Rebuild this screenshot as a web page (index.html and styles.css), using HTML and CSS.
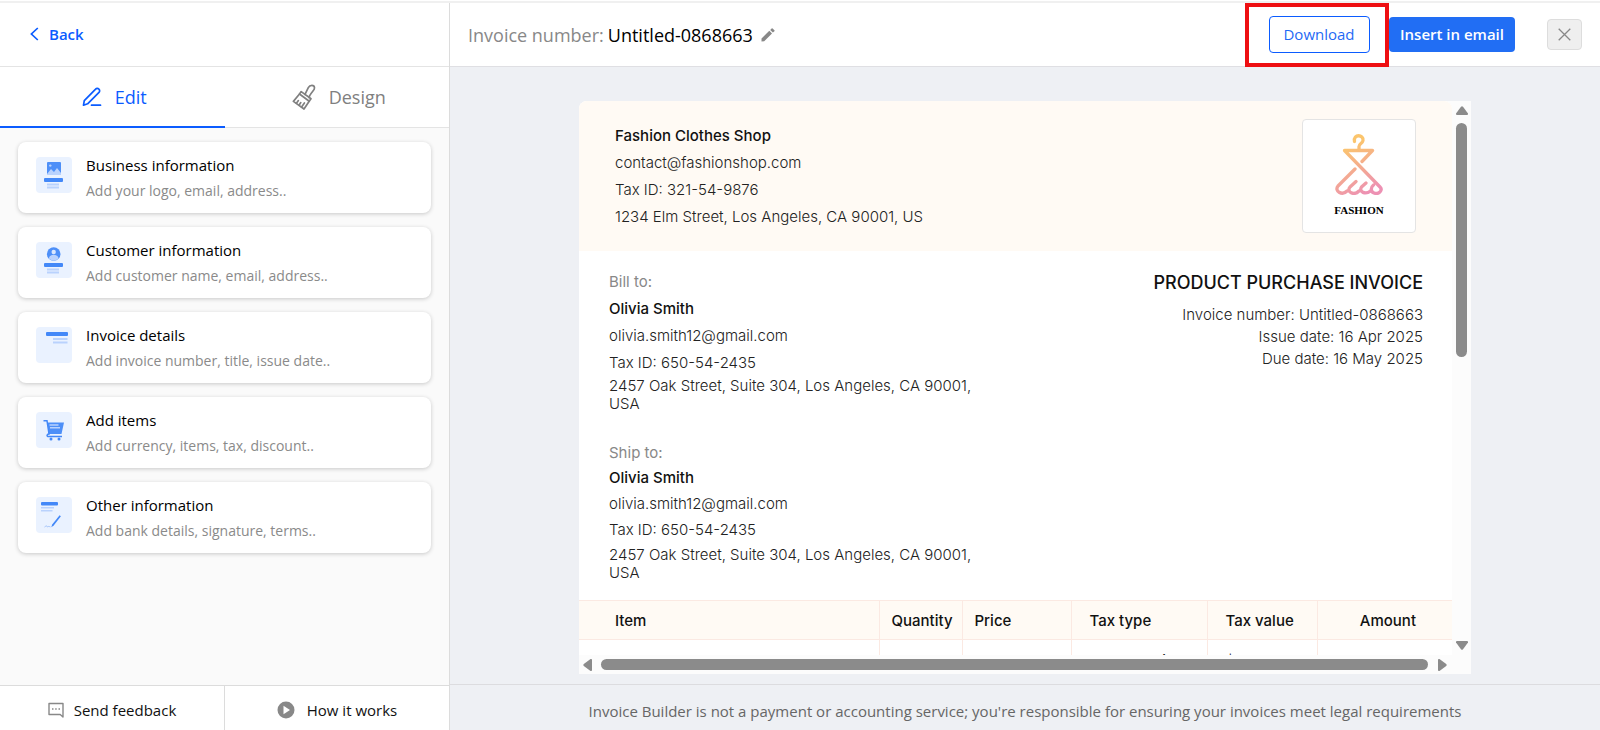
FILE: index.html
```html
<!DOCTYPE html>
<html lang="en">
<head>
  <meta charset="UTF-8">
  <title>Invoice Builder</title>
  <link rel="stylesheet" href="styles.css">
</head>
<body>
  <aside class="sidebar">
    <div class="back-bar">
      <a href="#" class="back">
        <svg width="9" height="14" viewBox="0 0 9 14" fill="none" stroke="currentColor" stroke-width="1.7"><path d="M7.8 1 1.4 7l6.4 6"/></svg>
        Back
      </a>
    </div>

    <div class="tabs">
      <button class="tab active">
        <svg width="20" height="20" viewBox="0 0 20 20" fill="none" stroke="currentColor" stroke-width="1.7" stroke-linejoin="round" stroke-linecap="round"><path d="M1.5 18.200l.8-4.600L13.600 2.200a2.300 2.300 0 0 1 3.400 3.200L5.600 16.800z"/><path d="M9.500 18.200h9"/></svg>
        Edit
      </button>
      <button class="tab">
        <svg width="24" height="26" viewBox="0 0 24 26" fill="none" stroke="currentColor" stroke-width="1.7" stroke-linejoin="round" stroke-linecap="round"><path d="M9.200 7.600 19 14.800 17.200 17.200 7.500 10z"/><path d="M7.500 10 1.400 17.400 12 25 17.200 17.200"/><path d="M13 10.400 16.300 3.600c1.500-3 6-3.200 6.200.200.200 2.200-2.400 3.600-4.800 7.800l-.6 2"/><path d="M4.400 19.200l2-2.600M7 21.200l1.800-2.600M9.600 23l2.800-4"/></svg>
        Design
      </button>
    </div>

    <nav class="sections">
      <a href="#" class="section">
        <svg class="section-icon" viewBox="0 0 36 36"><rect x="11" y="5" width="14" height="13" rx="1" fill="#4d8ff8"/><path d="M11 17l4-5 3 3 3-4 4 5v2H11z" fill="#b9d2fd"/><circle cx="14.300" cy="8.600" r="1.200" fill="#b9d2fd"/><rect x="8" y="21" width="19" height="4" rx="1" fill="#4388f8"/><path d="M11 27.500h12M11 30.500h12" stroke="#b9d2fd" stroke-width="1.800"/></svg>
        <span class="section-text">
          <span class="section-title">Business information</span>
          <span class="section-hint">Add your logo, email, address..</span>
        </span>
      </a>
      <a href="#" class="section">
        <svg class="section-icon" viewBox="0 0 36 36"><circle cx="17.700" cy="12" r="6.800" fill="#4d8ff8"/><circle cx="17.700" cy="10" r="2.200" fill="#d9e7fe"/><path d="M12.800 16.600c.6-5 9.200-5 9.800 0a6.800 6.800 0 0 1-9.800 0z" fill="#b9d2fd"/><rect x="8" y="21" width="19" height="4" rx="1" fill="#4388f8"/><path d="M11 27.500h12M11 30.500h12" stroke="#b9d2fd" stroke-width="1.800"/></svg>
        <span class="section-text">
          <span class="section-title">Customer information</span>
          <span class="section-hint">Add customer name, email, address..</span>
        </span>
      </a>
      <a href="#" class="section">
        <svg class="section-icon" viewBox="0 0 36 36"><rect x="10" y="5" width="22" height="4" rx="1" fill="#4388f8"/><path d="M17 12h14.500M17 15.500h14.500" stroke="#b9d2fd" stroke-width="1.800"/></svg>
        <span class="section-text">
          <span class="section-title">Invoice details</span>
          <span class="section-hint">Add invoice number, title, issue date..</span>
        </span>
      </a>
      <a href="#" class="section">
        <svg class="section-icon" viewBox="0 0 36 36"><path d="M11.500 10.500H28L25.500 22H13z" fill="#4d8ff8"/><path d="M7.500 8.700h3.500L13 22c-2.500 0-2.500 2.500-.5 2.500H26" fill="none" stroke="#4388f8" stroke-width="1.500"/><path d="M13.500 13h9M14 15.800h10" stroke="#b9d2fd" stroke-width="1.500"/><circle cx="15" cy="27" r="1.500" fill="#4388f8"/><circle cx="23" cy="27" r="1.500" fill="#4388f8"/></svg>
        <span class="section-text">
          <span class="section-title">Add items</span>
          <span class="section-hint">Add currency, items, tax, discount..</span>
        </span>
      </a>
      <a href="#" class="section">
        <svg class="section-icon" viewBox="0 0 36 36"><rect x="5" y="5" width="17" height="3.500" rx="1" fill="#4388f8"/><path d="M5 10.800h13M5 13.800h11.500" stroke="#b9d2fd" stroke-width="1.600"/><path d="M23.600 18.200l1.300 1-7.200 9.400-2.400 1.600.9-2.600z" fill="#4388f8"/><path d="M8.500 30c2-1.600 2.500-1.200 3 0 1-1 2-.5 3 0" fill="none" stroke="#a5c5fb"/></svg>
        <span class="section-text">
          <span class="section-title">Other information</span>
          <span class="section-hint">Add bank details, signature, terms..</span>
        </span>
      </a>
    </nav>

    <div class="sidebar-footer">
      <button class="help-btn">
        <svg width="16" height="16" viewBox="0 0 16 16" fill="none" stroke="#888" stroke-width="1.400"><path d="M1 1.500h14v13.500l-2.800-2.500H1z" stroke-linejoin="round"/><path d="M4 7h1.500M7.200 7h1.500M10.500 7H12"/></svg>
        Send feedback
      </button>
      <button class="help-btn how">
        <svg width="18" height="18" viewBox="0 0 18 18"><circle cx="9" cy="9" r="8.500" fill="#888"/><path d="M6.500 4.800 13 9l-6.500 4.200z" fill="#fff"/></svg>
        How it works
      </button>
    </div>
  </aside>

  <main class="main">
    <header class="topbar">
      <span class="number-label">Invoice number:</span>
      <span class="number">Untitled-0868663</span>
      <button class="rename" aria-label="Rename invoice">
        <svg width="14" height="14" viewBox="0 0 14 14" fill="#888"><path d="M.5 10.600 8.300 2.800l2.700 2.700-7.800 7.800L.5 13.500zM9.200 1.900l1.400-1.400q.5-.5 1 0l1.800 1.800q.5.500 0 1L11.900 4.600z"/></svg>
      </button>
      <div class="actions">
        <div class="highlight"><button class="btn btn-outline">Download</button></div>
        <button class="btn btn-primary">Insert in email</button>
        <button class="close" aria-label="Close">
          <svg width="13" height="13" viewBox="0 0 13 13" stroke="#888" stroke-width="1.300"><path d="M.7.700l11.600 11.600M12.300.700.7 12.300"/></svg>
        </button>
      </div>
    </header>

    <div class="workspace">
      <div class="preview">
        <div class="paper">
          <section class="seller">
            <div class="lines">
              <b>Fashion Clothes Shop</b>
              <span>contact@fashionshop.com</span>
              <span>Tax ID: 321-54-9876</span>
              <span>1234 Elm Street, Los Angeles, CA 90001, US</span>
            </div>
            <div class="logo">
              <svg width="48" height="61" viewBox="0 0 48 61" fill="none" stroke="url(#fade)" stroke-width="3.300" stroke-linecap="round" stroke-linejoin="round">
                <defs>
                  <linearGradient id="fade" gradientUnits="userSpaceOnUse" x1="12" y1="12" x2="34" y2="58">
                    <stop offset="0" stop-color="#fbc56d"/>
                    <stop offset="1" stop-color="#ed91b3"/>
                  </linearGradient>
                </defs>
                <path d="M19.500 7.500c-1.500-8 9.500-7 8.500-1-.5 3-4 3-4 6v3"/>
                <path d="M27 27.500 37.500 16.500h-28L45 53c3 3-1 8-6 6-4-1.500-3-6-.5-8"/>
                <path d="M20 35 3 52c-4 5 4 10 9 5M21 47.500l-6 5.500c-4 5 4 9 9 4M31 49l-4.500 4c-3 5 4 8 9 4"/>
              </svg>
              <span>FASHION</span>
            </div>
          </section>

          <section class="details">
            <div class="parties">
              <div class="lines">
                <span class="muted">Bill to:</span>
                <b>Olivia Smith</b>
                <span>olivia.smith12@gmail.com</span>
                <span>Tax ID: 650-54-2435</span>
                <span class="address">2457 Oak Street, Suite 304, Los Angeles, CA 90001, USA</span>
              </div>
              <div class="lines ship">
                <span class="muted">Ship to:</span>
                <b>Olivia Smith</b>
                <span>olivia.smith12@gmail.com</span>
                <span>Tax ID: 650-54-2435</span>
                <span class="address">2457 Oak Street, Suite 304, Los Angeles, CA 90001, USA</span>
              </div>
            </div>
            <div class="summary">
              <h1>PRODUCT PURCHASE INVOICE</h1>
              <span>Invoice number: Untitled-0868663</span>
              <span>Issue date: 16 Apr 2025</span>
              <span>Due date: 16 May 2025</span>
            </div>
          </section>

          <table class="items">
            <thead>
              <tr>
                <th class="item">Item</th>
                <th class="qty">Quantity</th>
                <th class="price">Price</th>
                <th class="tax-type">Tax type</th>
                <th class="tax-value">Tax value</th>
                <th class="amount">Amount</th>
              </tr>
            </thead>
            <tbody>
              <tr>
                <td></td>
                <td></td>
                <td></td>
                <td class="tax-type">Consumption tax</td>
                <td class="tax-value">$8.00</td>
                <td></td>
              </tr>
            </tbody>
          </table>
        </div>

        <div class="scroll-y">
          <svg width="12" height="9" viewBox="0 0 12 9" fill="#8b8b8b"><path d="M5 .8q1-1 2 0l5 6.700q.2 1.500-1 1.500H1q-1.200 0-1-1.500z"/></svg>
          <div class="thumb"></div>
          <svg width="12" height="9" viewBox="0 0 12 9" fill="#8b8b8b"><path d="M5 8.200q1 1 2 0l5-6.700Q12.200 0 11 0H1Q-.2 0 0 1.500z"/></svg>
        </div>
        <div class="scroll-x">
          <svg width="9" height="12" viewBox="0 0 9 12" fill="#8b8b8b"><path d="M.8 5q-1 1 0 2l6.700 5q1.500.2 1.500-1V1q0-1.200-1.500-1z"/></svg>
          <div class="thumb"></div>
          <svg width="9" height="12" viewBox="0 0 9 12" fill="#8b8b8b"><path d="M8.200 5q1 1 0 2l-6.700 5Q0 12.200 0 11V1Q0-.2 1.500 0z"/></svg>
        </div>
      </div>
    </div>

    <footer class="disclaimer">Invoice Builder is not a payment or accounting service; you're responsible for ensuring your invoices meet legal requirements</footer>
  </main>
</body>
</html>
```

FILE: styles.css
```css
* {
  box-sizing: border-box;
}
body {
  margin: 1px 0 0;
  height: calc(100vh - 1px);
  display: flex;
  border-top: 2px solid #f0f0f0;
  font-family: "Segoe UI", "Open Sans", sans-serif;
  font-size: 15px;
  color: #111;
  background: #fff;
}
button {
  font: inherit;
  color: inherit;
  background: none;
  border: 0;
  padding: 0;
  cursor: pointer;
}
a {
  color: inherit;
  text-decoration: none;
}
svg {
  flex: none;
}

/* sidebar */
.sidebar {
  width: 450px;
  flex: none;
  display: flex;
  flex-direction: column;
  border-right: 1px solid #dcdcdc;
  background: #fafafa;
}
.back-bar {
  height: 64px;
  display: flex;
  align-items: center;
  padding: 0 0 2px 30px;
  border-bottom: 1px solid #e4e4e4;
  background: #fff;
}
.back {
  display: flex;
  align-items: center;
  gap: 10px;
  font-weight: 600;
  color: #0b5cff;
}
.tabs {
  display: flex;
  background: #fff;
}
.tab {
  flex: 1;
  height: 61px;
  display: flex;
  align-items: center;
  justify-content: center;
  gap: 13px;
  padding-left: 4px;
  font-size: 18px;
  color: #808080;
  border-bottom: 1px solid #e4e4e4;
}
.tab.active {
  color: #0b5cff;
  border-bottom: 2px solid #0b5cff;
}
.sections {
  flex: 1;
  display: flex;
  flex-direction: column;
  gap: 14px;
  padding: 14px 18px;
}
.section {
  height: 71px;
  display: flex;
  gap: 14px;
  padding: 15px 18px;
  border-radius: 8px;
  background: #fff;
  box-shadow: 0 1px 4px rgba(0, 0, 0, 0.2);
}
.section-icon {
  width: 36px;
  height: 36px;
  border-radius: 4px;
  background: #eaf2ff;
}
.section-text {
  display: flex;
  flex-direction: column;
  gap: 2px;
  line-height: 24px;
  margin-top: -4px;
}
.section-title {
  font-weight: 500;
  color: #000;
}
.section-hint {
  color: #8a8a8a;
  font-size: 14px;
}
.sidebar-footer {
  height: 45px;
  display: flex;
  border-top: 1px solid #dcdcdc;
  background: #fff;
}
.help-btn {
  flex: 1;
  display: flex;
  align-items: center;
  justify-content: center;
  gap: 10px;
  padding-top: 4px;
  font-weight: 500;
}
.help-btn.how {
  gap: 12px;
  border-left: 1px solid #dcdcdc;
}

/* main column */
.main {
  flex: 1;
  min-width: 0;
  display: flex;
  flex-direction: column;
  background: #eef0f4;
}
.topbar {
  height: 64px;
  flex: none;
  display: flex;
  align-items: center;
  padding: 0 18px;
  font-size: 18px;
  border-bottom: 1px solid #dfdfe3;
  background: #fff;
}
.number-label {
  color: #888;
}
.number {
  margin: 0 8px 0 4px;
  color: #000;
}
.rename {
  display: flex;
}
.actions {
  display: flex;
  align-items: center;
  margin-left: auto;
}
.highlight {
  height: 64px;
  width: 144px;
  display: flex;
  align-items: center;
  justify-content: center;
  border: 4px solid #ee0f12;
}
.btn {
  padding-bottom: 2px;
  font-size: 15px;
  border-radius: 4px;
  white-space: nowrap;
}
.btn-outline {
  width: 101px;
  height: 37px;
  margin-left: 4px;
  border: 1px solid #0b5cff;
  color: #1f6af5;
}
.btn-primary {
  width: 126px;
  height: 35px;
  font-weight: 600;
  color: #fff;
  background: #216ef4;
}
.close {
  width: 35px;
  height: 31px;
  margin-left: 32px;
  display: flex;
  align-items: center;
  justify-content: center;
  border: 1px solid #ddd;
  border-radius: 4px;
  background: #efefef;
}
.workspace {
  flex: 1;
  min-height: 0;
  display: flex;
  justify-content: center;
  padding: 34px 24px 10px;
}
.preview {
  width: 100%;
  max-width: 892px;
  display: grid;
  grid-template-columns: minmax(0, 1fr) 19px;
  grid-template-rows: minmax(0, 1fr) 19px;
  background: #fcfcfc;
  border-top-left-radius: 8px;
}
.disclaimer {
  height: 46px;
  flex: none;
  padding-top: 4px;
  line-height: 44px;
  text-align: center;
  color: #666;
  border-top: 1px solid #dcdcdf;
}

/* invoice */
.paper {
  overflow: hidden;
  border-radius: 8px 8px 0 0;
  background: #fff;
  font-family: Inter, sans-serif;
  font-size: 15px;
  font-weight: 300;
  color: #222;
}
.lines {
  display: flex;
  flex-direction: column;
  line-height: 27px;
}
.lines b {
  font-weight: 500;
  color: #111;
}
.seller {
  display: flex;
  justify-content: space-between;
  padding: 18px 36px;
  background: #fffaf4;
}
.seller .lines {
  padding-top: 3px;
}
.logo {
  width: 114px;
  height: 114px;
  display: flex;
  flex-direction: column;
  align-items: center;
  padding-top: 14px;
  border: 1px solid #e4e4e4;
  border-radius: 4px;
  background: #fff;
}
.logo span {
  margin-top: 7px;
  font-family: "Liberation Serif", serif;
  font-size: 11px;
  font-weight: 700;
  line-height: 16px;
  color: #000;
}
.details {
  display: flex;
  justify-content: space-between;
  padding: 17px 29px 18px 30px;
}
.parties {
  width: 380px;
}
.muted {
  color: #888;
  font-weight: 400;
}
.address {
  margin-top: 1px;
  line-height: 18px;
}
.ship {
  margin-top: 28px;
  line-height: 26px;
}
.ship .muted {
  line-height: 24px;
}
.ship .address {
  margin-top: 3px;
}
.summary {
  display: flex;
  flex-direction: column;
  padding-top: 1px;
  line-height: 22px;
  text-align: right;
}
.summary h1 {
  margin: 0 0 7px;
  font-size: 18px;
  font-weight: 500;
  line-height: 28px;
  color: #111;
}
.items {
  width: 100%;
  table-layout: fixed;
  border-collapse: collapse;
  text-align: left;
  white-space: nowrap;
}
.items th,
.items td {
  height: 39px;
  padding: 0 0 0 12px;
  border: 1px solid #fbe9e2;
  font-weight: 500;
  color: #111;
}
.items th {
  background: #fffaf4;
}
.items td {
  height: 42px;
  font-weight: 400;
}
.items th:first-child,
.items td:first-child {
  border-left: 0;
}
.items th:last-child,
.items td:last-child {
  border-right: 0;
}
.items .item {
  padding-left: 36px;
}
.qty {
  width: 83px;
}
.price {
  width: 109px;
}
.items .tax-type {
  width: 136px;
  padding-left: 18px;
}
.items .tax-value {
  width: 110px;
  padding-left: 18px;
}
.items .amount {
  width: 135px;
  padding-right: 36px;
  text-align: right;
}

/* scrollbars */
.scroll-y,
.scroll-x {
  display: flex;
  align-items: center;
  background: #fcfcfc;
}
.scroll-y {
  flex-direction: column;
  justify-content: space-between;
  padding: 5px 0 5px;
}
.scroll-x {
  justify-content: space-between;
  padding: 0 5px 0 4px;
}
.thumb {
  border-radius: 6px;
  background: #8b8b8b;
}
.scroll-y .thumb {
  width: 11px;
  height: 43%;
  margin: 8px 0 auto;
}
.scroll-x .thumb {
  flex: 1;
  height: 11px;
  margin: 0 10px 0 9px;
}
```
